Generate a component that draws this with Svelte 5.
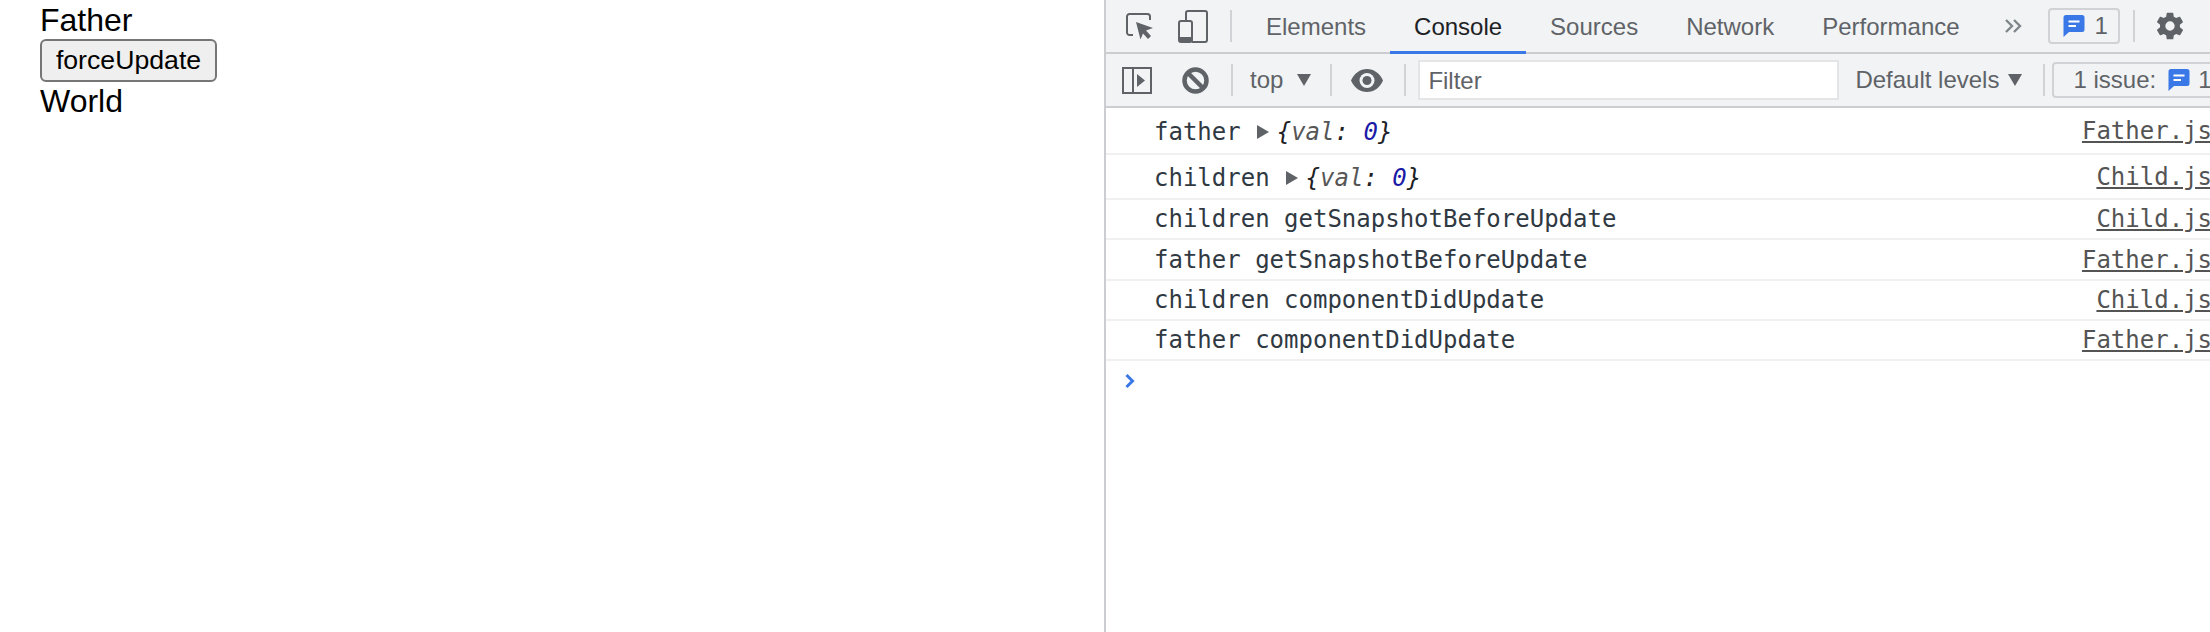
<script>
  const tabs = ['Elements', 'Console', 'Sources', 'Network', 'Performance'];

  const logs = [
    { text: 'father', obj: true, src: 'Father.js', h: 47 },
    { text: 'children', obj: true, src: 'Child.js', h: 45 },
    { text: 'children getSnapshotBeforeUpdate', src: 'Child.js', h: 40 },
    { text: 'father getSnapshotBeforeUpdate', src: 'Father.js', h: 41 },
    { text: 'children componentDidUpdate', src: 'Child.js', h: 40 },
    { text: 'father componentDidUpdate', src: 'Father.js', h: 40 },
  ];
</script>

{#snippet chat()}
  <svg width="22" height="24" viewBox="0 0 22 24" class="chat">
    <path d="M3 1h16a2.500 2.500 0 0 1 2.500 2.500v12a2.500 2.500 0 0 1-2.500 2.500H6l-5.500 5V3.500A2.500 2.500 0 0 1 3 1z" fill="#3b78e7"/>
    <path d="M5.500 6.500h11v2h-11zM5.500 11h7.500v2H5.500z" fill="#fff"/>
  </svg>
{/snippet}

<div class="page">
  <div class="app-pane">
    <div class="line">Father</div>
    <button>forceUpdate</button>
    <div class="line">World</div>
  </div>

  <div class="devtools">
    <div class="tabbar">
      <svg class="inspect" width="27" height="26" viewBox="0 0 27 26">
        <path d="M24 7V3.500A2.500 2.500 0 0 0 21.500 1H3.500A2.500 2.500 0 0 0 1 3.500v16A2.500 2.500 0 0 0 3.500 22H7" fill="none" stroke="#5f6368" stroke-width="2"/>
        <path d="M10 9l17 6-7 2.500 5 5.500-3 3-5-5.500-2.500 6z" fill="#5f6368"/>
      </svg>
      <svg class="device" width="30" height="33" viewBox="0 0 30 33">
        <path d="M8 11V3a2 2 0 0 1 2-2h17a2 2 0 0 1 2 2v27a2 2 0 0 1-2 2H14" fill="none" stroke="#5f6368" stroke-width="2"/>
        <rect x="1" y="11" width="13" height="21" rx="2" fill="none" stroke="#5f6368" stroke-width="2"/>
        <rect x="1" y="27" width="13" height="5" fill="#5f6368"/>
      </svg>
      <span class="sep first"></span>
      <div class="tabs">
        {#each tabs as tab}
          <div class="tab" class:active={tab === 'Console'}>{tab}</div>
        {/each}
      </div>
      <svg class="more" width="18" height="16" viewBox="0 0 18 16">
        <path d="M2 2l6 6-6 6M10 2l6 6-6 6" fill="none" stroke="#80868b" stroke-width="2.400"/>
      </svg>
      <div class="badge">{@render chat()}<span>1</span></div>
      <span class="sep badge-sep"></span>
      <svg class="gear" width="32" height="32" viewBox="0 0 24 24">
        <path fill="#5f6368" d="M19.400 13c.04-.33.06-.66.06-1s-.02-.67-.06-1l2.100-1.650c.2-.15.250-.42.120-.640l-2-3.460c-.12-.22-.390-.300-.610-.220l-2.490 1c-.52-.4-1.080-.73-1.690-.98l-.380-2.650A.49.49 0 0 0 14 1.980h-4c-.25 0-.46.180-.49.420l-.38 2.650c-.61.250-1.170.59-1.690.98l-2.490-1c-.23-.09-.49 0-.61.220l-2 3.460c-.13.220-.07.490.120.640L4.570 11c-.04.330-.07.670-.07 1s.03.670.07 1l-2.110 1.650c-.19.150-.25.420-.12.640l2 3.460c.12.220.390.300.610.220l2.490-1c.52.400 1.080.730 1.690.980l.38 2.650c.03.240.240.420.490.420h4c.25 0 .46-.18.490-.42l.38-2.650c.61-.25 1.170-.59 1.690-.98l2.490 1c.23.090.49 0 .610-.22l2-3.460c.12-.22.070-.49-.12-.64zM12 15.500a3.500 3.500 0 1 1 0-7 3.500 3.500 0 0 1 0 7z"/>
      </svg>
    </div>

    <div class="filterbar">
      <svg class="sidebar" width="30" height="27" viewBox="0 0 30 27">
        <rect x="1" y="1" width="28" height="25" fill="none" stroke="#5f6368" stroke-width="2"/>
        <path d="M11 1v25" stroke="#5f6368" stroke-width="2"/>
        <path d="M15 7l8 6.500-8 6.500z" fill="#5f6368"/>
      </svg>
      <svg class="block" width="27" height="27" viewBox="0 0 27 27">
        <circle cx="13.500" cy="13.500" r="11" fill="none" stroke="#5f6368" stroke-width="4.500"/>
        <path d="M6 6l15 15" stroke="#5f6368" stroke-width="4.500"/>
      </svg>
      <span class="sep s1"></span>
      <span class="top">top</span>
      <span class="caret c1"></span>
      <span class="sep s2"></span>
      <svg class="eye" width="32" height="23" viewBox="0 0 32 23">
        <path d="M16 0C9 0 3 4.500 0 11.500 3 18.500 9 23 16 23s13-4.500 16-11.500C29 4.500 23 0 16 0z" fill="#5f6368"/>
        <circle cx="16" cy="11.500" r="7.500" fill="#f1f3f4"/>
        <circle cx="16" cy="11.500" r="4.500" fill="#5f6368"/>
      </svg>
      <span class="sep s3"></span>
      <div class="filter">Filter</div>
      <span class="levels">Default levels</span>
      <span class="caret c2"></span>
      <span class="sep s4"></span>
      <div class="issues">1 issue:{@render chat()}<span>1</span></div>
    </div>

    <div class="console">
      {#each logs as log}
        <div class="row" style="height: {log.h}px">
          <span class="msg" class:has-obj={log.obj}>{log.text}{#if log.obj}<span class="tri"></span><i>{'{'}<span class="key">val</span>: <span class="num">0</span>{'}'}</i>{/if}</span>
          <a href="#src" class="src">{log.src}</a>
        </div>
      {/each}
      <svg class="prompt" width="12" height="16" viewBox="0 0 12 16">
        <path d="M2.500 2l6 6-6 6" fill="none" stroke="#3b78e7" stroke-width="3"/>
      </svg>
    </div>
  </div>
</div>

<style>
  :global(body) {
    margin: 0;
    background: #fff;
  }

  .page {
    display: flex;
    width: 2210px;
    height: 632px;
    overflow: hidden;
    font-family: "Liberation Sans", Arial, sans-serif;
  }

  .app-pane {
    width: 1104px;
    flex: none;
    padding: 2px 0 0 40px;
    box-sizing: border-box;
    font-size: 32px;
    color: #000;
  }

  .line {
    line-height: 37px;
  }

  button {
    display: block;
    width: 177px;
    height: 43px;
    margin-bottom: 1px;
    padding: 0;
    box-sizing: border-box;
    font: 26.67px "Liberation Sans", Arial, sans-serif;
    color: #000;
    background: #efefef;
    border: 2px solid #767676;
    border-radius: 6px;
  }

  .devtools {
    flex: 1;
    min-width: 0;
    border-left: 2px solid #cbcdd1;
    font-size: 24px;
    color: #5f6368;
  }

  .tabbar,
  .filterbar {
    display: flex;
    align-items: center;
    height: 54px;
    background: #f1f3f4;
    border-bottom: 2px solid #cbcdd1;
    box-sizing: border-box;
  }

  .sep {
    flex: none;
    width: 2px;
    height: 32px;
    background: #d0d2d6;
  }

  .inspect {
    flex: none;
    margin-left: 20px;
  }

  .device {
    flex: none;
    margin-left: 25px;
  }

  .sep.first {
    margin-left: 22px;
  }

  .tabs {
    display: flex;
    align-self: stretch;
    margin-left: 10px;
    margin-bottom: -2px;
  }

  .tab {
    display: flex;
    align-items: center;
    padding: 2px 24px 0;
    box-sizing: border-box;
    border-bottom: 3px solid transparent;
  }

  .tab.active {
    color: #202124;
    border-bottom-color: #3b78e7;
  }

  .more {
    flex: none;
    margin-left: 20px;
  }

  .badge {
    flex: none;
    display: flex;
    align-items: center;
    gap: 10px;
    width: 72px;
    height: 36px;
    margin-left: 26px;
    padding-left: 13px;
    box-sizing: border-box;
    border: 2px solid #d0d2d6;
    border-radius: 4px;
  }

  .sep.badge-sep {
    margin-left: 13px;
  }

  .gear {
    flex: none;
    margin-left: 19px;
  }

  .sidebar {
    flex: none;
    margin-left: 16px;
  }

  .block {
    flex: none;
    margin-left: 30px;
  }

  .sep.s1 {
    margin-left: 22px;
  }

  .top {
    margin-left: 17px;
  }

  .caret {
    flex: none;
    width: 0;
    height: 0;
    border-left: 7px solid transparent;
    border-right: 7px solid transparent;
    border-top: 12px solid #5f6368;
  }

  .caret.c1 {
    margin-left: 14px;
  }

  .sep.s2 {
    margin-left: 19px;
  }

  .eye {
    flex: none;
    margin-left: 19px;
  }

  .sep.s3 {
    margin-left: 21px;
  }

  .filter {
    flex: none;
    width: 421px;
    height: 40px;
    margin-left: 12px;
    padding-left: 8px;
    box-sizing: border-box;
    line-height: 38px;
    background: #fff;
    border: 2px solid #e4e5e7;
  }

  .levels {
    margin-left: 16px;
    white-space: nowrap;
  }

  .caret.c2 {
    margin-left: 9px;
  }

  .sep.s4 {
    margin-left: 21px;
  }

  .issues {
    flex: none;
    display: flex;
    align-items: center;
    width: 200px;
    height: 36px;
    margin-left: 7px;
    padding-left: 19px;
    box-sizing: border-box;
    white-space: pre;
    border: 2px solid #d0d2d6;
    border-radius: 4px;
  }

  .issues span {
    margin-left: 8px;
  }

  .issues :global(.chat) {
    margin-left: 12px;
  }

  .chat {
    flex: none;
  }

  .console {
    font: 24px "DejaVu Sans Mono", monospace;
    color: #303942;
  }

  .row {
    display: flex;
    align-items: center;
    justify-content: space-between;
    box-sizing: border-box;
    padding-left: 48px;
    border-bottom: 2px solid #f0f0f0;
    white-space: pre;
  }

  .msg.has-obj {
    margin-top: 3px;
  }

  .tri {
    display: inline-block;
    width: 0;
    height: 0;
    margin: 0 8px 1px 16px;
    border-top: 7px solid transparent;
    border-bottom: 7px solid transparent;
    border-left: 12px solid #5f6368;
  }

  .msg i {
    color: #202124;
  }

  .key {
    color: #565656;
  }

  .num {
    color: #1a1aa6;
  }

  .src {
    color: #545454;
    margin-right: -2px;
    text-decoration: underline;
  }

  .prompt {
    display: block;
    margin: 12px 0 0 18px;
  }
</style>
